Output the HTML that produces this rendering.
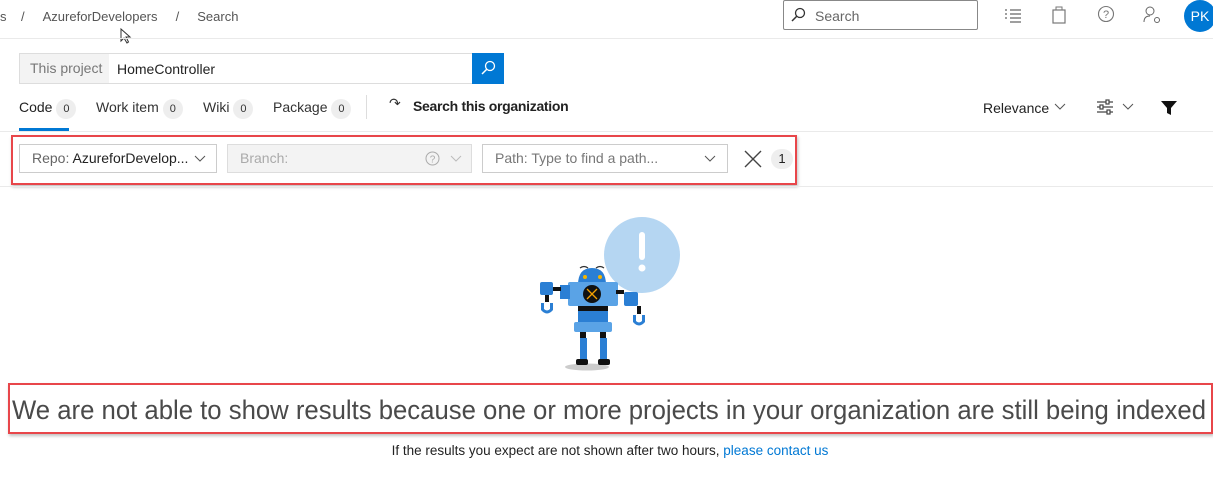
<!DOCTYPE html>
<html><head><style>
*{box-sizing:border-box;margin:0;padding:0}
body{width:1213px;height:479px;background:#fff;font-family:"Liberation Sans",sans-serif;color:#333;position:relative;overflow:hidden}
.a{position:absolute}
.badge{display:inline-block;background:#eee;border-radius:10px;font-size:11px;width:20px;height:20px;line-height:20px;text-align:center;color:#333;margin-left:4px}
.t{font-size:14px;color:#333}
</style></head><body>
<div class="a" style="left:0;top:9px;font-size:13px;color:#555">s&nbsp;&nbsp;&nbsp;&nbsp;/&nbsp;&nbsp;&nbsp;&nbsp;&nbsp;AzureforDevelopers&nbsp;&nbsp;&nbsp;&nbsp;&nbsp;/&nbsp;&nbsp;&nbsp;&nbsp;&nbsp;Search</div>
<svg class="a" style="left:120px;top:28px" width="12" height="16"><path d="M1 1 L1 13 L4 10 L7 15 L8.5 14 L6 9 L10 9 Z" fill="#fff" stroke="#333"/></svg>
<div class="a" style="left:783px;top:0;width:195px;height:30px;border:1px solid #888;border-radius:2px"></div>
<svg class="a" style="left:790px;top:7px" width="16" height="16"><circle cx="10" cy="6" r="4.5" fill="none" stroke="#333" stroke-width="1.3"/><path d="M7 9 L2 14" stroke="#333" stroke-width="1.5"/></svg>
<div class="a" style="left:815px;top:8px;font-size:14px;color:#666">Search</div>
<svg class="a" style="left:1004px;top:7px" width="18" height="16"><g stroke="#666" stroke-width="1.2"><path d="M6 3H17M6 7H17M6 11H17M6 15H17M1 3H3M1 7H3M1 11H3"/></g></svg>
<svg class="a" style="left:1051px;top:5px" width="16" height="20"><rect x="2" y="5" width="12" height="13" fill="none" stroke="#777" stroke-width="1.2"/><path d="M5 5V2H11V5" fill="none" stroke="#777"/></svg>
<svg class="a" style="left:1097px;top:5px" width="18" height="18"><circle cx="9" cy="9" r="7.5" fill="none" stroke="#777" stroke-width="1.1"/><text x="9" y="13" font-size="11" text-anchor="middle" fill="#777" font-family="Liberation Sans">?</text></svg>
<svg class="a" style="left:1143px;top:5px" width="20" height="20"><circle cx="7" cy="6" r="4" fill="none" stroke="#666"/><path d="M1 17C1 12 4 11 7 11" fill="none" stroke="#666"/><circle cx="14" cy="15" r="2.5" fill="none" stroke="#666"/></svg>
<div class="a" style="left:1184px;top:0;width:32px;height:32px;border-radius:50%;background:#0078d4;color:#fff;font-size:14px;line-height:32px;text-align:center">PK</div>
<div class="a" style="left:0;top:38px;width:1213px;height:1px;background:#eaeaea"></div>
<div class="a" style="left:19px;top:53px;width:454px;height:31px;border:1px solid #ddd;background:#fff"></div>
<div class="a" style="left:20px;top:54px;width:89px;height:29px;background:#f3f3f3;color:#777;font-size:14px;line-height:29px;padding-left:10px">This project</div>
<div class="a" style="left:117px;top:61px;font-size:14px;color:#222">HomeController</div>
<div class="a" style="left:472px;top:53px;width:32px;height:31px;background:#0078d4"></div>
<svg class="a" style="left:480px;top:60px" width="16" height="16"><circle cx="10" cy="6" r="4.5" fill="none" stroke="#fff" stroke-width="1.3"/><path d="M7 9 L2 14" stroke="#fff" stroke-width="1.5"/></svg>
<div class="a t" style="left:19px;top:99px"><span style="color:#222">Code</span><span class="badge">0</span></div>
<div class="a t" style="left:96px;top:99px">Work item<span class="badge">0</span></div>
<div class="a t" style="left:203px;top:99px">Wiki<span class="badge">0</span></div>
<div class="a t" style="left:273px;top:99px">Package<span class="badge">0</span></div>
<div class="a" style="left:19px;top:128px;width:50px;height:3px;background:#0078d4"></div>
<div class="a" style="left:366px;top:95px;width:1px;height:24px;background:#ddd"></div>
<div class="a" style="left:389px;top:95px;font-size:14px;color:#333">&#8631;</div>
<div class="a" style="left:413px;top:98px;font-size:14px;font-weight:bold;color:#222;letter-spacing:-0.3px">Search this organization</div>
<div class="a" style="left:983px;top:100px;font-size:14px;color:#222">Relevance</div>
<svg class="a" style="left:1054px;top:103px" width="12" height="8"><path d="M1 1L6 6L11 1" fill="none" stroke="#555"/></svg>
<svg class="a" style="left:1096px;top:99px" width="18" height="16"><g stroke="#444" stroke-width="1.2"><path d="M1 3H17M1 8H17M1 13H17"/><rect x="10" y="1" width="3" height="4" fill="#fff"/><rect x="4" y="6" width="3" height="4" fill="#fff"/><rect x="11" y="11" width="3" height="4" fill="#fff"/></g></svg>
<svg class="a" style="left:1122px;top:103px" width="12" height="8"><path d="M1 1L6 6L11 1" fill="none" stroke="#555"/></svg>
<svg class="a" style="left:1160px;top:100px" width="18" height="16"><path d="M1 1H17L11 8V15L7 13V8Z" fill="#111"/></svg>
<div class="a" style="left:0;top:131px;width:1213px;height:1px;background:#eaeaea"></div>
<div class="a" style="left:19px;top:144px;width:198px;height:29px;border:1px solid #ccc;font-size:14px;line-height:27px;padding-left:12px;color:#666">Repo: <span style="color:#222">AzureforDevelop...</span></div>
<svg class="a" style="left:194px;top:155px" width="12" height="8"><path d="M1 1L6 6L11 1" fill="none" stroke="#555"/></svg>
<div class="a" style="left:227px;top:144px;width:245px;height:29px;background:#f3f3f3;border:1px solid #ddd;font-size:14px;line-height:27px;padding-left:12px;color:#aaa">Branch:</div>
<svg class="a" style="left:425px;top:151px" width="15" height="15"><circle cx="7.5" cy="7.5" r="6.5" fill="none" stroke="#aaa"/><text x="7.5" y="11.5" font-size="10" text-anchor="middle" fill="#aaa" font-family="Liberation Sans">?</text></svg>
<svg class="a" style="left:450px;top:155px" width="12" height="8"><path d="M1 1L6 6L11 1" fill="none" stroke="#bbb"/></svg>
<div class="a" style="left:482px;top:144px;width:246px;height:29px;border:1px solid #ccc;font-size:14px;line-height:27px;padding-left:12px;color:#777">Path: Type to find a path...</div>
<svg class="a" style="left:704px;top:155px" width="12" height="8"><path d="M1 1L6 6L11 1" fill="none" stroke="#555"/></svg>
<svg class="a" style="left:744px;top:150px" width="18" height="18"><path d="M1 1L17 17M17 1L1 17" stroke="#444" stroke-width="1.4"/></svg>
<div class="a" style="left:771px;top:149px;width:22px;height:20px;border-radius:10px;background:#eee;font-size:13px;text-align:center;line-height:20px;color:#222">1</div>
<div class="a" style="left:11px;top:135px;width:786px;height:50px;border:2px solid #e8464a;box-shadow:1px 2px 3px rgba(0,0,0,.25)"></div>
<div class="a" style="left:0;top:186px;width:1213px;height:1px;background:#eaeaea"></div>
<svg class="a" style="left:520px;top:210px" width="180" height="170">
<circle cx="122" cy="45" r="38" fill="#b5d6f2"/>
<rect x="119" y="22" width="6" height="28" rx="3" fill="#fff"/><circle cx="122" cy="58" r="3.5" fill="#fff"/>
<ellipse cx="67" cy="157" rx="22" ry="3.5" fill="#ccc"/>
<path d="M60 58 Q64 55 68 58 M76 58 Q80 55 84 58" stroke="#333" fill="none" stroke-width="1.2"/>
<path d="M58 75 Q58 58 72 58 Q86 58 86 75 Z" fill="#2b7fd4"/>
<circle cx="65" cy="67" r="2" fill="#f5b400"/><circle cx="80" cy="67" r="2" fill="#f5b400"/>
<rect x="48" y="72" width="50" height="24" rx="2" fill="#5aa3e6"/>
<circle cx="72" cy="84" r="9" fill="#111"/><path d="M67 79L77 89M77 79L67 89" stroke="#f5a000" stroke-width="1.3"/>
<rect x="40" y="75" width="10" height="14" fill="#2b7fd4"/><rect x="33" y="77" width="8" height="4" fill="#111"/>
<rect x="20" y="72" width="13" height="13" rx="2" fill="#2b7fd4"/>
<rect x="25" y="85" width="4" height="7" fill="#111"/>
<path d="M21 93 L21 100 Q27 107 33 100 L33 93 L30 93 L30 99 Q27 102 24 99 L24 93 Z" fill="#2b7fd4"/>
<rect x="96" y="80" width="8" height="4" fill="#111"/><rect x="104" y="82" width="14" height="14" rx="2" fill="#2b7fd4"/>
<rect x="117" y="96" width="4" height="8" fill="#111"/>
<path d="M113 105 L113 112 Q119 119 125 112 L125 105 L122 105 L122 111 Q119 114 116 111 L116 105 Z" fill="#2b7fd4"/>
<rect x="58" y="96" width="30" height="5" fill="#111"/>
<rect x="58" y="101" width="30" height="11" fill="#2b7fd4"/>
<rect x="54" y="112" width="38" height="10" rx="2" fill="#5aa3e6"/>
<rect x="60" y="122" width="6" height="6" fill="#111"/><rect x="80" y="122" width="6" height="6" fill="#111"/>
<rect x="60" y="128" width="7" height="24" fill="#2b7fd4"/><rect x="80" y="128" width="7" height="24" fill="#2b7fd4"/>
<rect x="56" y="149" width="12" height="6" rx="2" fill="#111"/><rect x="78" y="149" width="12" height="6" rx="2" fill="#111"/>
</svg>
<div class="a" style="left:8px;top:383px;width:1205px;height:51px;border:2px solid #e8464a;box-shadow:1px 2px 3px rgba(0,0,0,.25)"></div>
<svg class="a" style="left:0;top:383px" width="1213" height="51"><text x="12" y="36" font-size="27" fill="#4a4a4a" font-family="Liberation Sans" textLength="1194" lengthAdjust="spacingAndGlyphs">We are not able to show results because one or more projects in your organization are still being indexed</text></svg>
<div class="a" style="left:0;top:443px;width:1220px;text-align:center;font-size:13.5px;color:#222">If the results you expect are not shown after two hours, <span style="color:#0078d4">please contact us</span></div>
</body></html>
